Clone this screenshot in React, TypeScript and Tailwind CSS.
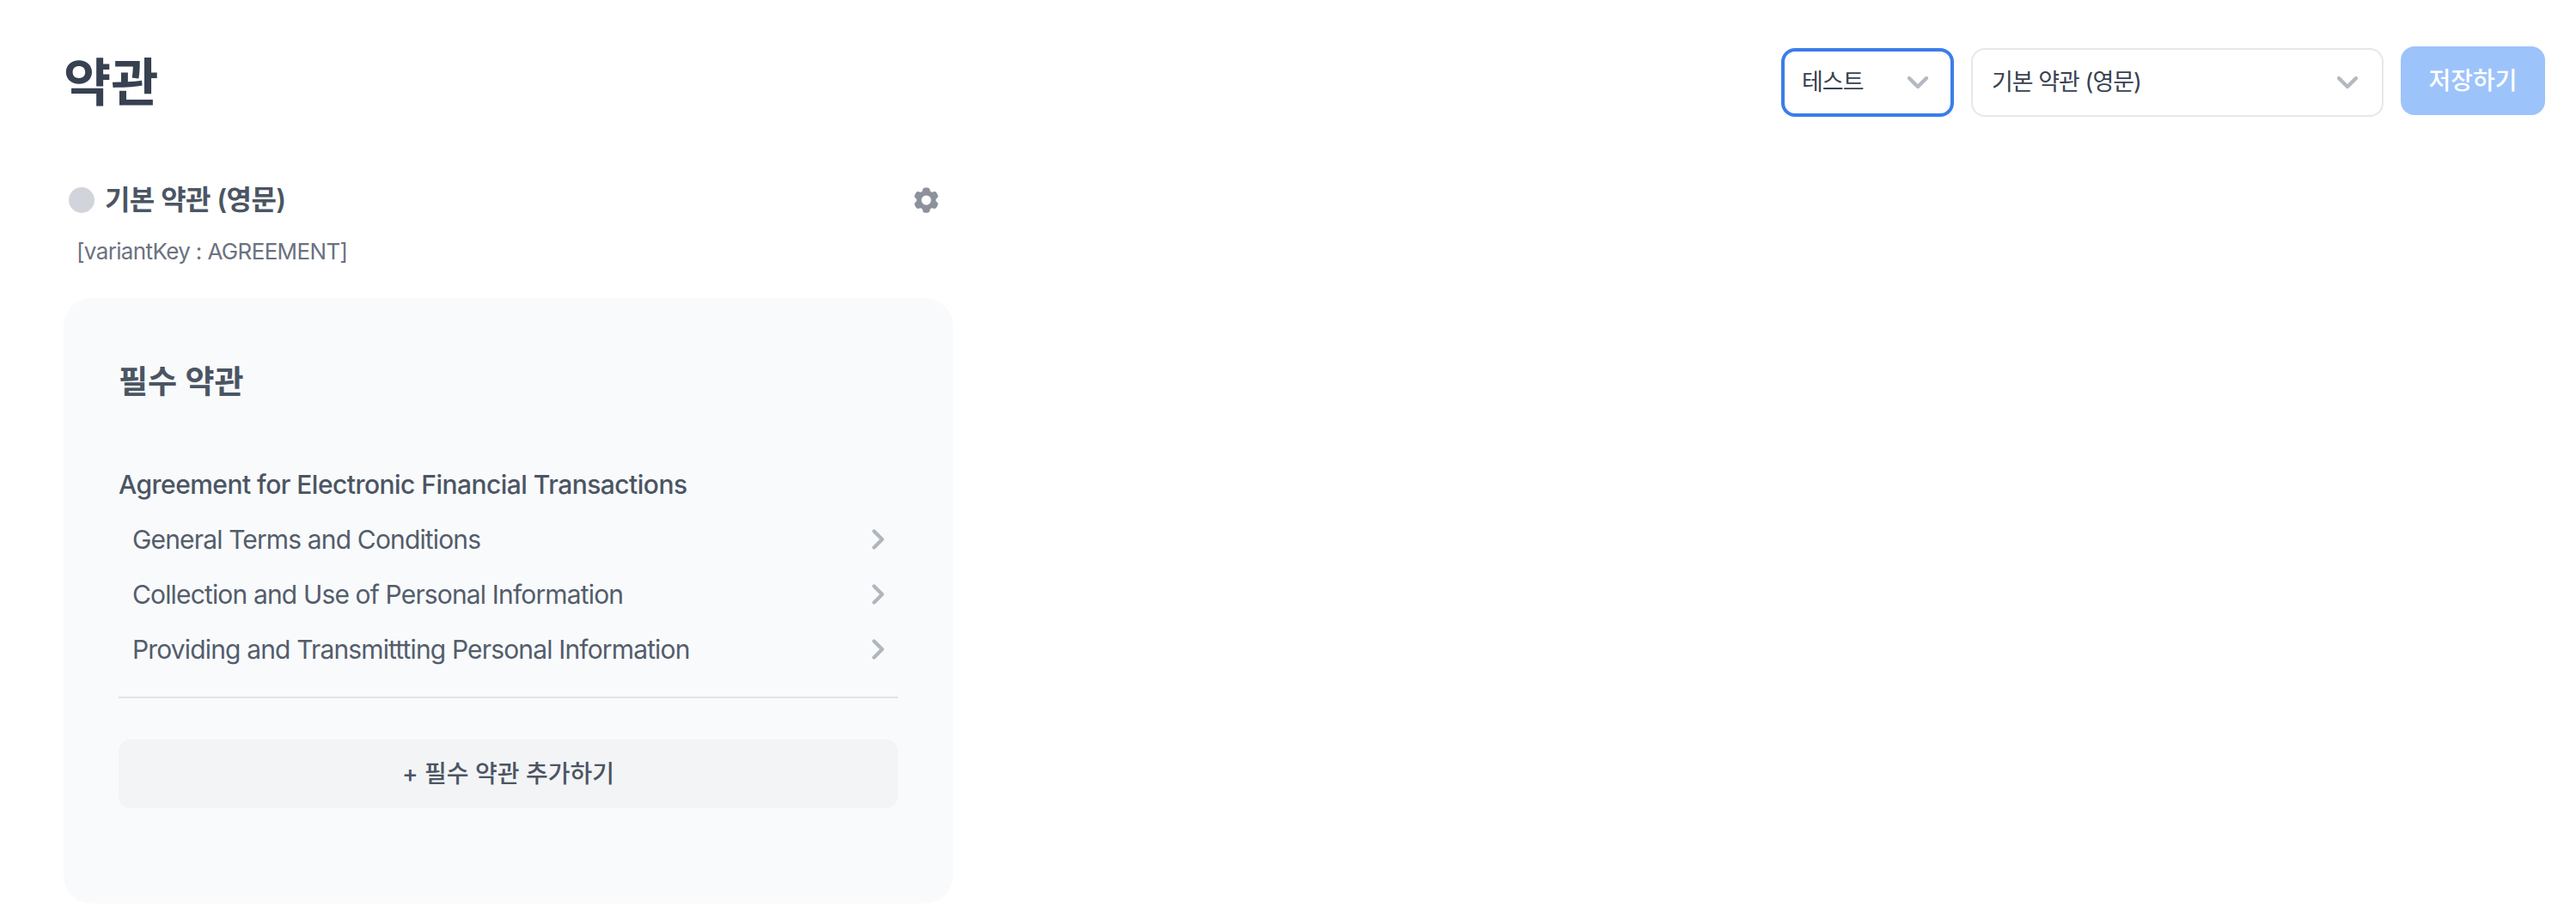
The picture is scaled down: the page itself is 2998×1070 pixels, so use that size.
import { ChevronDown, ChevronRight } from "lucide-react";
import { HiCog6Tooth } from "react-icons/hi2";

const FONT = "font-['Inter','Noto_Sans_CJK_KR',sans-serif]";

const TERMS = [
  "General Terms and Conditions",
  "Collection and Use of Personal Information",
  "Providing and Transmittting Personal Information",
];

function Select({ label, active, className }: { label: string; active?: boolean; className: string }) {
  return (
    <div
      className={`flex h-[80px] items-center justify-between rounded-[16px] bg-white text-[27px] tracking-[-1px] text-[#374151] ${
        active ? "border-[4px] border-[#3b7de9] pl-[20px] pr-[18px]" : "border-2 border-[#e5e7eb] pl-[22px] pr-[20px]"
      } ${className}`}
    >
      <span>{label}</span>
      <ChevronDown className="h-[40px] w-[40px] text-[#b4b9c1]" strokeWidth={2.6} />
    </div>
  );
}

export default function App() {
  return (
    <div className={`min-h-[1070px] bg-white ${FONT}`}>
      <header className="flex items-start justify-between pl-[74px] pr-[36px] pt-[54px]">
        <h1 className="mt-[4px] text-[60px] font-bold leading-[76px] text-[#374151]">약관</h1>
        <div className="flex items-start gap-[20px]">
          <Select label="테스트" active className="mt-[2px] w-[201px]" />
          <Select label="기본 약관 (영문)" className="mt-[2px] w-[480px]" />
          <button className="h-[80px] w-[168px] rounded-[16px] bg-[#9dc3fb] text-[28px] font-medium text-white">
            저장하기
          </button>
        </div>
      </header>

      <section className="ml-[74px] mt-[77px] w-[1035px]">
        <div className="flex items-center justify-between pl-[6px] pr-[13px]">
          <div className="flex items-center gap-[12px]">
            <span className="h-[30px] w-[30px] rounded-full bg-[#d1d5db]" />
            <span className="text-[32px] font-semibold leading-[40px] tracking-[-0.6px] text-[#4b5563]">기본 약관 (영문)</span>
          </div>
          <HiCog6Tooth className="h-[36px] w-[36px] text-[#8b929c]" />
        </div>
        <p className="mt-[24px] pl-[15px] text-[26px] leading-[32px] tracking-[-0.64px] text-[#6b7280]">[variantKey : AGREEMENT]</p>

        <div className="mt-[38px] h-[705px] rounded-[32px] bg-[#f9fafc] px-[64px] pt-[74px]">
          <h2 className="text-[37px] font-semibold leading-[48px] text-[#4b5563]">필수 약관</h2>
          <h3 className="mt-[75px] text-[30px] font-medium leading-[40px] tracking-[-0.53px] text-[#4b5563]">
            Agreement for Electronic Financial Transactions
          </h3>
          <ul className="mt-[12px] border-b-2 border-[#e1e3e7] pb-[23px]">
            {TERMS.map((t) => (
              <li key={t} className="flex h-[64px] items-center justify-between pl-[16px] pr-[4px] text-[30px] tracking-[-0.85px] text-[#535d6b]">
                <span>{t}</span>
                <ChevronRight className="h-[38px] w-[38px] text-[#b0b6be]" strokeWidth={2.6} />
              </li>
            ))}
          </ul>
          <button className="mt-[48px] h-[80px] w-full rounded-[14px] bg-[#f3f4f6] text-[28px] font-medium text-[#4b5563]">
            + 필수 약관 추가하기
          </button>
        </div>
      </section>
    </div>
  );
}
